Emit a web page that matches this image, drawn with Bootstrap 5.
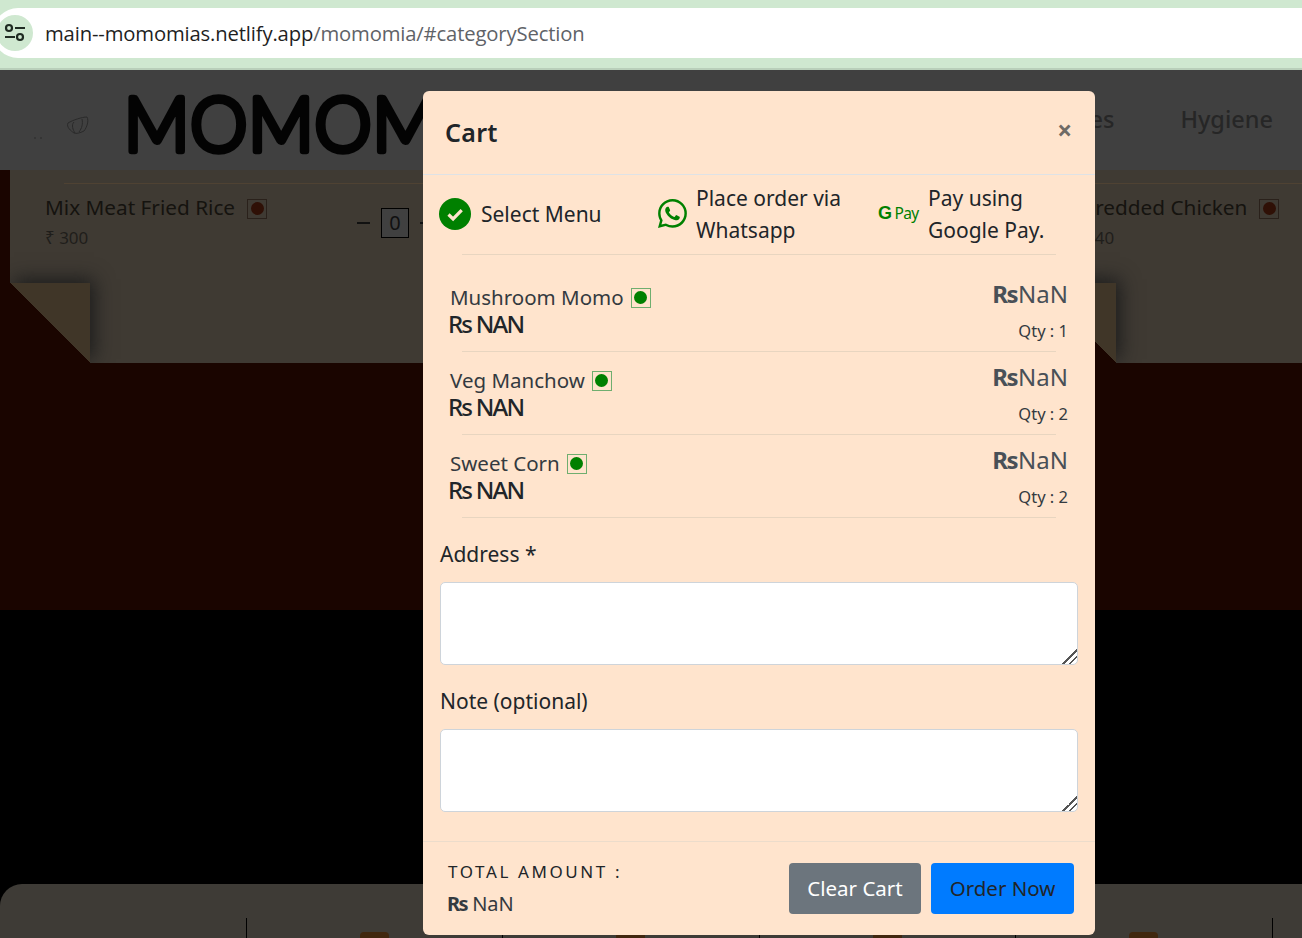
<!DOCTYPE html>
<html lang="en">
<head>
<meta charset="utf-8">
<title>Momomia Cart</title>
<link href="https://cdn.jsdelivr.net/npm/bootstrap@5.3.0/dist/css/bootstrap.min.css" rel="stylesheet">
<style>
html,body{height:938px;overflow:hidden;background:#000;}
body{font-family:"Noto Sans","Open Sans",sans-serif;color:#212529;}
.chrome-bar{height:70px;background:#cfe8d0;border-bottom:2px solid #b9cfba;padding-top:8px;}
.url-pill{height:50px;background:#fff;border-radius:25px 0 0 25px;margin-left:-7px;padding-left:4px;gap:12px;font:20.25px "Open Sans",sans-serif;letter-spacing:-.15px;color:#1f1f1f;}
.url-icon{width:36px;height:36px;border-radius:50%;background:#cfe8d0;flex:none;}
.url-rest{color:#5f6368;}
.site-head{height:100px;background:#404040;overflow:hidden;}
.logo-art{width:500px;height:100px;flex:none;margin-left:36px;margin-right:-160px;}
.logo-art text{font-family:"Lato",sans-serif;font-weight:300;font-size:75px;fill:#030303;stroke:#030303;stroke-width:6.5px;stroke-linejoin:round;stroke-linecap:round;letter-spacing:1px;}
.head-logo{width:60px;height:40px;margin:34px 0 0 32px;flex:none;}
.head-nav{gap:66px;font-size:23.5px;font-weight:500;color:#262626;padding-right:29px;white-space:nowrap;}
.band-red{height:440px;background:#1a0500;padding-left:10px;}
.band-black{height:274px;background:#000;}
.menu-panel{height:193px;background:#3f3a33;overflow:hidden;}
.menu-panel-a{flex:1 1 auto;}
.menu-panel-b{flex:0 0 266px;}
.menu-rule{height:1px;background:#4f4233;margin:13px 0 0 54px;}
.menu-row{padding:8px 0 0 35px;height:70px;}
.dish-name{font-size:20.75px;color:#15130f;line-height:30px;white-space:nowrap;}
.dish-price{font-size:17px;color:#1f1e1b;line-height:24px;margin-top:4px;white-space:nowrap;}
.mark-box{display:inline-flex;align-items:center;justify-content:center;width:20px;height:20px;vertical-align:1px;margin-left:7px;}
.mark-red{border:1px solid #2a211b;background:#3f3a33;margin-left:12px;vertical-align:0;}
.mark-red i{width:13px;height:13px;border-radius:50%;background:#2f1006;display:block;}
.mark-green{border:1px solid #6fae6f;}
.mark-green i{width:13px;height:13px;border-radius:50%;background:green;display:block;}
.qty-ctl{margin-left:90px;margin-top:16px;gap:11px;font-size:22px;color:#111;}
.qty-dash{width:13px;height:2px;background:#111;}
.qty-box{width:28px;height:30px;border:1px solid #000;background:#404040;font-size:20px;line-height:28px;text-align:center;}
.fold-corner{width:80px;height:80px;margin-top:auto;background:linear-gradient(45deg,#1a0500 50%,#403628 50.5%);box-shadow:4px -4px 18px #1c1c1c;}
.bottom-panel{height:54px;background:#3e3b36;border-radius:22px 0 0 0;overflow:hidden;margin-top:0;}
.bottom-grid{margin:34px 0 0 -10px;}
.bottom-cell{flex:0 0 256.5px;height:40px;border-right:1px solid #000;}
.bottom-tab{width:29px;height:12px;margin:14px auto 0;border-radius:4px 4px 0 0;background:#41270f;}
.cart-dialog{max-width:672px;width:672px;margin:91px 0 0 423px;}
.cart-box{background:#ffe4cd;height:844px;border:0;border-radius:6px;}
.cart-head{height:84px;padding:0 22px;border-bottom:1px solid #dee2e6;}
.cart-title{font-size:25px;font-weight:600;color:#212529;letter-spacing:.3px;}
.cart-x{font-size:26px;font-weight:700;color:#6f6a65;line-height:1;margin-top:-6px;margin-right:1px;}
.cart-body{padding:0 17px 0 17px;}
.step-row{height:79px;padding-bottom:2px;font-size:21px;line-height:32px;color:#212529;}
.step-a{width:219px;gap:10px;margin-left:-1px;}
.step-b{width:219px;gap:9px;}
.step-c{gap:11px;}
.gpay-mark{width:40px;color:green;font-size:15.5px;white-space:nowrap;line-height:1;letter-spacing:-.6px;flex:none;padding-left:1px;margin-top:-1px;}
.gpay-mark b{font-size:18px;font-weight:800;margin-right:3px;font-family:"Liberation Sans",sans-serif;}
.item-rule{height:1px;background:#e8d5c0;margin:0 22px 0 22px;}
.cart-line{height:82px;padding:0 10px 0 10px;}
.cart-first{height:96px;padding-top:14px;}
.item-name{font-size:20.5px;line-height:28px;color:#343a40;white-space:nowrap;margin-top:14px;}
.item-rs{font-size:24px;line-height:26px;font-weight:500;letter-spacing:-1.8px;color:#212529;white-space:nowrap;margin-left:-2px;}
.item-sum{font-size:24px;line-height:30px;color:#495057;margin-top:10px;white-space:nowrap;}
.item-sum b{font-weight:700;letter-spacing:-1.5px;margin-right:1px;}
.item-qty{font-size:16.5px;line-height:24px;color:#343a40;margin-top:10px;}
.field-label{font-size:21px;line-height:30px;color:#212529;margin:0 0 13px 0;}
.field-box{height:83px;border:1px solid #ced4da;border-radius:5px;background:#fff;box-shadow:none;margin-bottom:21px;}
.field-box::-webkit-resizer{background:linear-gradient(135deg,transparent 50%,#555 50%,#555 58%,transparent 58%,transparent 72%,#555 72%,#555 80%,transparent 80%);}
.item-rule-last{margin-bottom:21px;}
.cart-foot{flex:0 0 auto;height:94px;margin-top:auto;padding:0 21px 0 25px;border-top:1px solid #ecdccb;}
.total-lab{font-size:17px;line-height:24px;letter-spacing:2.6px;color:#212529;white-space:nowrap;}
.total-val{font-size:20px;line-height:28px;margin-top:6px;color:#343a40;white-space:nowrap;}
.total-val b{font-weight:700;letter-spacing:-1.5px;margin-right:5px;margin-left:-1px;}
.btn-clear,.btn-order{height:51px;font-size:20.5px;border-radius:4px;padding:0;border:0;}
.btn-clear{width:132px;background:#6c757d;color:#fff;}
.btn-order{width:143px;background:#007bff;color:#212529;margin-left:10px;}
</style>
</head>
<body>
<div class="chrome-bar">
  <div class="url-pill d-flex align-items-center">
    <span class="url-icon d-flex align-items-center justify-content-center">
      <svg width="22" height="20" viewBox="0 0 22 20" fill="none" stroke="#1f2b22" stroke-width="2.2"><circle cx="5" cy="5" r="3"/><path d="M11 5h10M1 14h10"/><circle cx="16" cy="14" r="3"/></svg>
    </span>
    <span>main--momomias.netlify.app<span class="url-rest">/momomia/#categorySection</span></span>
  </div>
</div>

<header class="site-head d-flex">
  <svg class="head-logo" viewBox="0 0 60 40" fill="none" stroke="#2a2a2a"><path d="M2 34h2M8 34h2"/><path d="M36 19c5-3 14-6 19-6 2 4 0 10-3 14-4 2-8 3-10 2-3-2-8-6-6-10z"/><path d="M42 18c-3 3-1 8 1 11M50 15c1 5 0 9-3 13"/></svg>
  <svg class="logo-art" viewBox="0 0 500 100"><text transform="translate(-4 81) scale(.96 1)">MOMOMIA</text></svg>
  <nav class="head-nav d-flex align-items-center ms-auto"><span>Specialities</span><span>Hygiene</span></nav>
</header>

<section class="band-red d-flex">
  <div class="menu-panel menu-panel-a d-flex flex-column">
    <div class="menu-rule"></div>
    <div class="menu-row d-flex">
      <div>
        <div class="dish-name">Mix Meat Fried Rice<span class="mark-box mark-red"><i></i></span></div>
        <div class="dish-price">₹ 300</div>
      </div>
      <div class="qty-ctl d-flex align-items-center align-self-start"><span class="qty-dash"></span><span class="qty-box">0</span><span class="qty-dash"></span></div>
    </div>
    <div class="fold-corner"></div>
  </div>
  <div class="menu-panel menu-panel-b d-flex flex-column">
    <div class="menu-rule"></div>
    <div class="menu-row d-flex">
      <div>
        <div class="dish-name">Shredded Chicken<span class="mark-box mark-red"><i></i></span></div>
        <div class="dish-price">₹ 240</div>
      </div>
    </div>
    <div class="fold-corner"></div>
  </div>
</section>
<div class="band-black"></div>
<section class="bottom-panel">
  <div class="bottom-grid d-flex">
    <div class="bottom-cell"></div>
    <div class="bottom-cell"><div class="bottom-tab"></div></div>
    <div class="bottom-cell"><div class="bottom-tab"></div></div>
    <div class="bottom-cell"><div class="bottom-tab"></div></div>
    <div class="bottom-cell"><div class="bottom-tab"></div></div>
  </div>
</section>

<div class="modal d-block">
  <div class="modal-dialog cart-dialog">
    <div class="modal-content cart-box">
      <div class="modal-header cart-head d-flex align-items-center justify-content-between">
        <h5 class="modal-title cart-title">Cart</h5>
        <span class="cart-x">×</span>
      </div>
      <div class="modal-body cart-body flex-grow-0">
        <div class="step-row d-flex align-items-center">
          <div class="step-a d-flex align-items-center">
            <svg width="32" height="32" viewBox="0 0 32 32"><circle cx="16" cy="16" r="16" fill="green"/><path d="M9.5 16.5l4.6 4.4 8.6-8.8" fill="none" stroke="#ffe4cd" stroke-width="3.2"/></svg>
            <span>Select Menu</span>
          </div>
          <div class="step-b d-flex align-items-center">
            <svg width="29" height="29" viewBox="0 0 16 16" fill="green"><path d="M13.601 2.326A7.854 7.854 0 0 0 7.994 0C3.627 0 .068 3.558.064 7.926c0 1.399.366 2.76 1.057 3.965L0 16l4.204-1.102a7.933 7.933 0 0 0 3.79.965h.004c4.368 0 7.926-3.558 7.93-7.93A7.898 7.898 0 0 0 13.6 2.326zM7.994 14.521a6.573 6.573 0 0 1-3.356-.92l-.24-.144-2.494.654.666-2.433-.156-.251a6.56 6.56 0 0 1-1.007-3.505c0-3.626 2.957-6.584 6.591-6.584a6.56 6.56 0 0 1 4.66 1.931 6.557 6.557 0 0 1 1.928 4.66c-.004 3.639-2.961 6.592-6.592 6.592zm3.615-4.934c-.197-.099-1.17-.578-1.353-.646-.182-.065-.315-.099-.445.099-.133.197-.513.646-.627.775-.114.133-.232.148-.43.05-.197-.1-.836-.308-1.592-.985-.59-.525-.985-1.175-1.103-1.372-.114-.198-.011-.304.088-.403.087-.088.197-.232.296-.346.1-.114.133-.198.198-.33.065-.134.034-.248-.015-.347-.05-.099-.445-1.076-.612-1.47-.16-.389-.323-.335-.445-.34-.114-.007-.247-.007-.38-.007a.729.729 0 0 0-.529.247c-.182.198-.691.677-.691 1.654 0 .977.71 1.916.81 2.049.098.133 1.394 2.132 3.383 2.992.47.205.84.326 1.129.418.475.152.904.129 1.246.08.38-.058 1.171-.48 1.338-.943.164-.464.164-.86.114-.943-.049-.084-.182-.133-.38-.232z"/></svg>
            <span>Place order via<br>Whatsapp</span>
          </div>
          <div class="step-c d-flex align-items-center">
            <span class="gpay-mark"><b>G</b>Pay</span>
            <span>Pay using<br>Google Pay.</span>
          </div>
        </div>
        <div class="item-rule"></div>

        <div class="cart-line cart-first d-flex justify-content-between">
          <div><div class="item-name">Mushroom Momo<span class="mark-box mark-green"><i></i></span></div><div class="item-rs">Rs NAN</div></div>
          <div class="text-end"><div class="item-sum"><b>Rs</b>NaN</div><div class="item-qty">Qty : 1</div></div>
        </div>
        <div class="item-rule"></div>
        <div class="cart-line d-flex justify-content-between">
          <div><div class="item-name">Veg Manchow<span class="mark-box mark-green"><i></i></span></div><div class="item-rs">Rs NAN</div></div>
          <div class="text-end"><div class="item-sum"><b>Rs</b>NaN</div><div class="item-qty">Qty : 2</div></div>
        </div>
        <div class="item-rule"></div>
        <div class="cart-line d-flex justify-content-between">
          <div><div class="item-name">Sweet Corn<span class="mark-box mark-green"><i></i></span></div><div class="item-rs">Rs NAN</div></div>
          <div class="text-end"><div class="item-sum"><b>Rs</b>NaN</div><div class="item-qty">Qty : 2</div></div>
        </div>
        <div class="item-rule item-rule-last"></div>

        <label class="form-label field-label" for="addr">Address *</label>
        <textarea id="addr" class="form-control field-box"></textarea>
        <label class="form-label field-label" for="note">Note (optional)</label>
        <textarea id="note" class="form-control field-box"></textarea>
      </div>
      <div class="modal-footer cart-foot d-flex justify-content-between align-items-center flex-nowrap">
        <div class="m-0"><div class="total-lab">TOTAL AMOUNT :</div><div class="total-val"><b>Rs</b>NaN</div></div>
        <div class="m-0 d-flex"><button type="button" class="btn btn-clear">Clear Cart</button><button type="button" class="btn btn-order">Order Now</button></div>
      </div>
    </div>
  </div>
</div>
<script src="https://cdn.jsdelivr.net/npm/bootstrap@5.3.0/dist/js/bootstrap.bundle.min.js"></script>
</body>
</html>
